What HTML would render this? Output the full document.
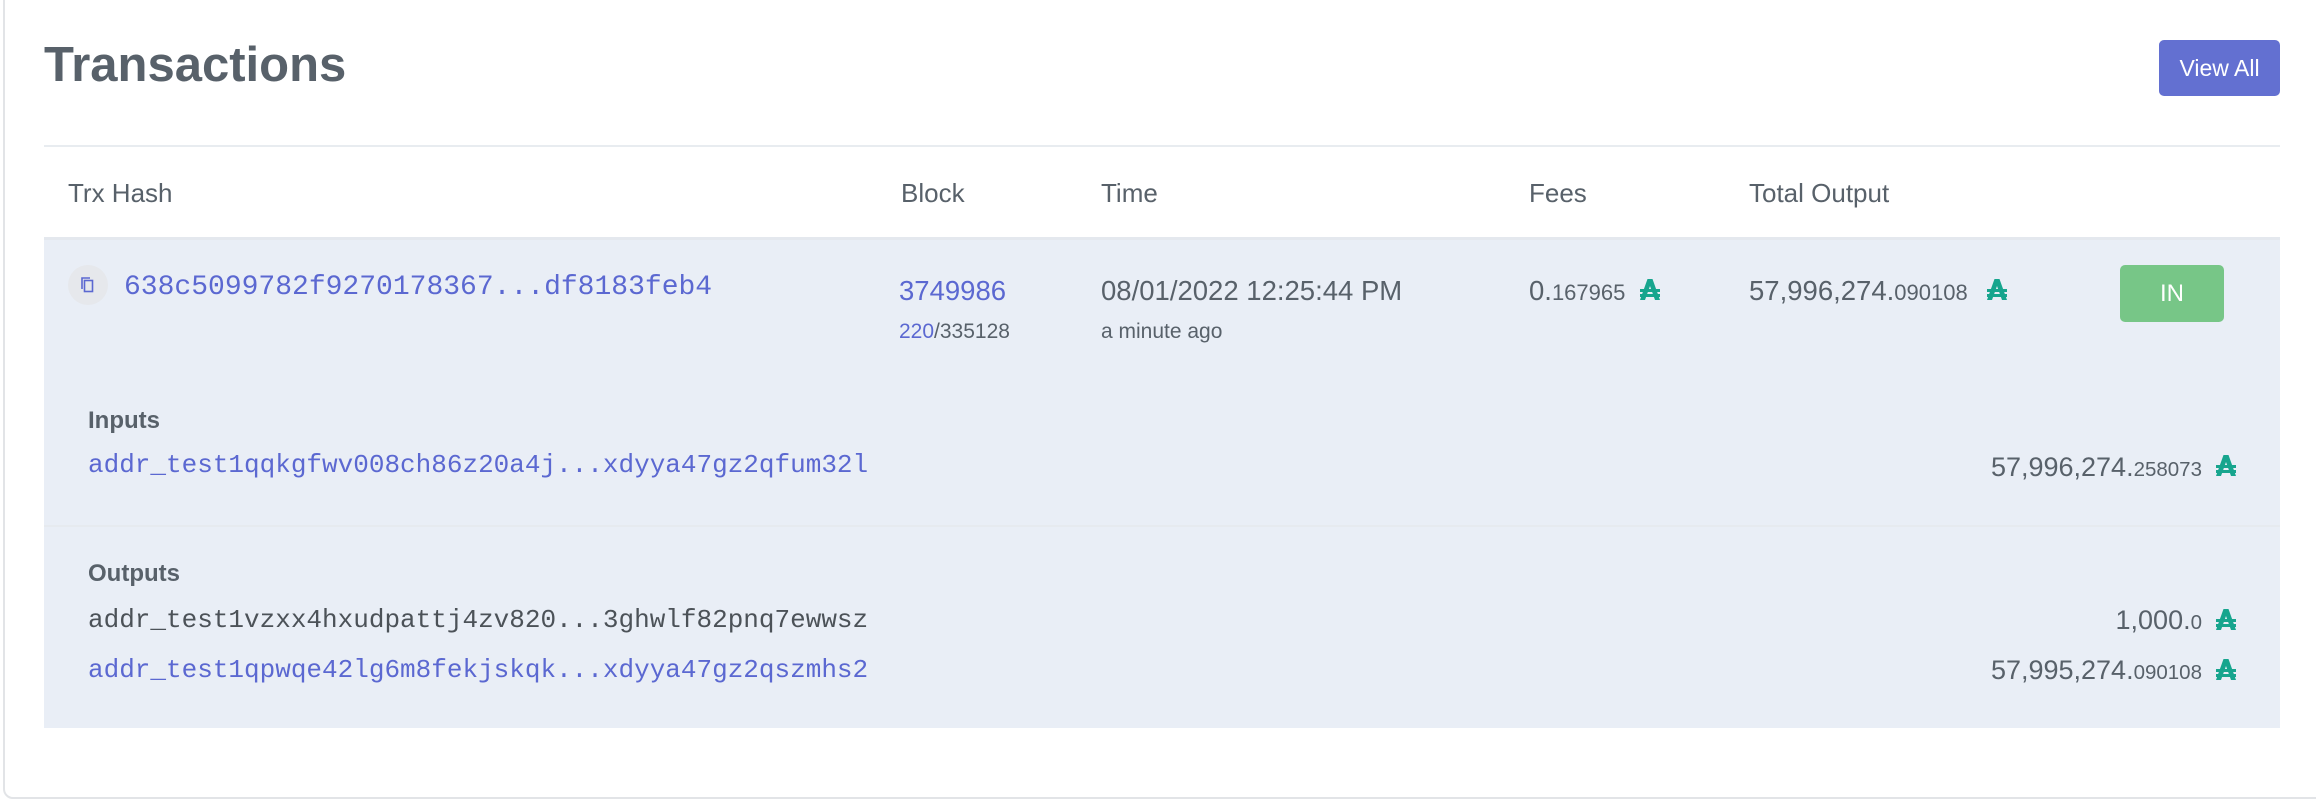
<!DOCTYPE html>
<html><head><meta charset="utf-8"><style>
*{margin:0;padding:0;box-sizing:border-box}
body{width:2316px;height:800px;background:#fff;position:relative;overflow:hidden;font-family:"Liberation Sans",Arial,sans-serif;color:#58616a}
.card{position:absolute;left:3px;top:-10px;width:2340px;height:809px;border:2px solid #e2e4e7;border-radius:10px}
.a{position:absolute;white-space:nowrap;line-height:1}
.mono{font-family:"Liberation Mono",monospace}
.blue{color:#5b68d1}
.s{font-size:21px}
svg.ada{position:absolute;width:20px;height:21px}
</style></head><body>
<div class="card"></div>
<div class="a" style="left:44px;top:41px;font-size:49px;font-weight:bold">Transactions</div>
<div style="position:absolute;left:2159px;top:40px;width:121px;height:56px;background:#6370d1;border-radius:5px;color:#fff;font-size:23px;line-height:56px;text-align:center">View All</div>
<div style="position:absolute;left:44px;top:145px;width:2236px;height:2px;background:#e8ecf0"></div>
<div class="a" style="left:68px;top:180px;font-size:26px">Trx Hash</div>
<div class="a" style="left:901px;top:180px;font-size:26px">Block</div>
<div class="a" style="left:1101px;top:180px;font-size:26px">Time</div>
<div class="a" style="left:1529px;top:180px;font-size:26px">Fees</div>
<div class="a" style="left:1749px;top:180px;font-size:26px">Total Output</div>

<div style="position:absolute;left:44px;top:237px;width:2236px;height:491px;background:#e9eef6"></div>
<div style="position:absolute;left:44px;top:237px;width:2236px;height:3px;background:#e4e8ee"></div>
<div style="position:absolute;left:44px;top:525px;width:2236px;height:2px;background:#e6eaef"></div>

<div style="position:absolute;left:68px;top:265px;width:40px;height:40px;border-radius:50%;background:#e6e8ec"></div>
<svg style="position:absolute;left:78px;top:275px" width="20" height="20" viewBox="0 0 20 20"><path d="M4 14V3h8" fill="none" stroke="#5b68d1" stroke-width="1.6"/><rect x="6.5" y="5.5" width="8" height="11" fill="none" stroke="#5b68d1" stroke-width="1.6"/></svg>
<div class="a mono blue" style="left:124px;top:274px;font-size:28px">638c5099782f9270178367...df8183feb4</div>

<div class="a blue" style="left:899px;top:277px;font-size:27.5px">3749986</div>
<div class="a s" style="left:899px;top:321px"><span class="blue">220</span>/335128</div>
<div class="a" style="left:1101px;top:277px;font-size:27.5px">08/01/2022 12:25:44 PM</div>
<div class="a s" style="left:1101px;top:321px">a minute ago</div>

<div class="a" style="left:1529px;top:277px;font-size:27.5px">0.<span style="font-size:22px">167965</span></div>
<svg class="ada" style="left:1640px;top:279px" viewBox="0 0 20 21"><path d="M7.5 0h5L20 21h-5L10 7 5 21H0z" fill="#17a58e"/><rect x="0" y="10" width="20" height="3" fill="#17a58e"/><rect x="0" y="15" width="20" height="3" fill="#17a58e"/></svg>
<div class="a" style="left:1749px;top:277px;font-size:27.5px">57,996,274.<span style="font-size:22px">090108</span></div>
<svg class="ada" style="left:1987px;top:279px" viewBox="0 0 20 21"><path d="M7.5 0h5L20 21h-5L10 7 5 21H0z" fill="#17a58e"/><rect x="0" y="10" width="20" height="3" fill="#17a58e"/><rect x="0" y="15" width="20" height="3" fill="#17a58e"/></svg>
<div style="position:absolute;left:2120px;top:265px;width:104px;height:57px;background:#77c687;border-radius:5px;color:#fff;font-size:24px;line-height:57px;text-align:center">IN</div>

<div class="a" style="left:88px;top:409px;font-size:24px;font-weight:bold">Inputs</div>
<div class="a mono blue" style="left:88px;top:452px;font-size:26px">addr_test1qqkgfwv008ch86z20a4j...xdyya47gz2qfum32l</div>
<div class="a" style="right:114px;top:454px;font-size:27px">57,996,274.<span style="font-size:20.5px">258073</span></div>
<svg class="ada" style="left:2216px;top:455px" viewBox="0 0 20 21"><path d="M7.5 0h5L20 21h-5L10 7 5 21H0z" fill="#17a58e"/><rect x="0" y="10" width="20" height="3" fill="#17a58e"/><rect x="0" y="15" width="20" height="3" fill="#17a58e"/></svg>

<div class="a" style="left:88px;top:562px;font-size:24px;font-weight:bold">Outputs</div>
<div class="a mono" style="left:88px;top:607px;font-size:26px;color:#4c5258">addr_test1vzxx4hxudpattj4zv820...3ghwlf82pnq7ewwsz</div>
<div class="a" style="right:114px;top:607px;font-size:27px">1,000.<span style="font-size:20.5px">0</span></div>
<svg class="ada" style="left:2216px;top:609px" viewBox="0 0 20 21"><path d="M7.5 0h5L20 21h-5L10 7 5 21H0z" fill="#17a58e"/><rect x="0" y="10" width="20" height="3" fill="#17a58e"/><rect x="0" y="15" width="20" height="3" fill="#17a58e"/></svg>
<div class="a mono blue" style="left:88px;top:657px;font-size:26px">addr_test1qpwqe42lg6m8fekjskqk...xdyya47gz2qszmhs2</div>
<div class="a" style="right:114px;top:657px;font-size:27px">57,995,274.<span style="font-size:20.5px">090108</span></div>
<svg class="ada" style="left:2216px;top:659px" viewBox="0 0 20 21"><path d="M7.5 0h5L20 21h-5L10 7 5 21H0z" fill="#17a58e"/><rect x="0" y="10" width="20" height="3" fill="#17a58e"/><rect x="0" y="15" width="20" height="3" fill="#17a58e"/></svg>
</body></html>
